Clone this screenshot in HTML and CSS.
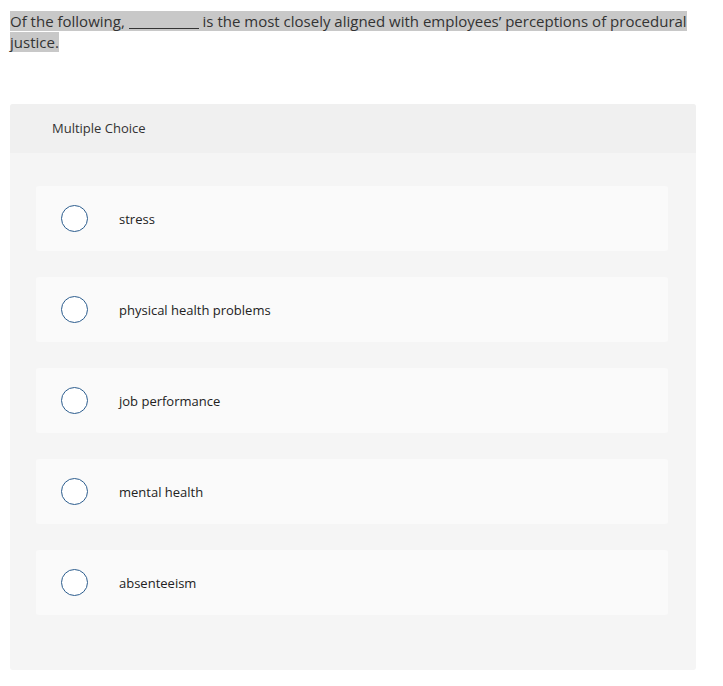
FILE: index.html
```html
<!DOCTYPE html>
<html lang="en">
<head>
  <meta charset="UTF-8">
  <meta name="viewport" content="width=device-width, initial-scale=1">
  <title>Multiple Choice</title>
  <link rel="stylesheet" href="styles.css">
</head>
<body>
  <div class="question">
    <span class="prompt">Of the following, <span class="blank"></span> is the most closely aligned with employees’ perceptions of procedural justice.</span>
  </div>

  <section class="panel">
    <div class="panel-head">Multiple Choice</div>
    <div class="choices">
      <label class="choice">
        <span class="radio"></span>
        <span class="choice-text">stress</span>
      </label>
      <label class="choice">
        <span class="radio"></span>
        <span class="choice-text">physical health problems</span>
      </label>
      <label class="choice">
        <span class="radio"></span>
        <span class="choice-text">job performance</span>
      </label>
      <label class="choice">
        <span class="radio"></span>
        <span class="choice-text">mental health</span>
      </label>
      <label class="choice">
        <span class="radio"></span>
        <span class="choice-text">absenteeism</span>
      </label>
    </div>
  </section>
</body>
</html>
```

FILE: styles.css
```css
body {
  margin: 0;
  font-family: 'Open Sans', 'Noto Sans', sans-serif;
  background-color: #fff;
  color: #333;
}

.question {
  width: 700px;
  height: 42px;
  padding: 11px 0 0 10px;
  font-size: 15px;
  line-height: 21px;
  color: #333;
}

.prompt {
  background-color: #c8c8c8;
}

.blank {
  display: inline-block;
  width: 70px;
  border-bottom: 1px solid #333;
  vertical-align: -2px;
}

.panel {
  margin: 51px 27px 0 10px;
  background-color: #f5f5f5;
  border-radius: 3px;
  overflow: hidden;
}

.panel-head {
  background-color: #f0f0f0;
  height: 49px;
  line-height: 49px;
  padding-left: 42px;
  font-size: 13px;
  color: #333;
}

.choices {
  display: flex;
  flex-direction: column;
  gap: 26px;
  padding: 33px 28px 55px 26px;
}

.choice {
  display: flex;
  align-items: center;
  height: 65px;
  padding-left: 25px;
  background-color: #fafafa;
  border-radius: 3px;
  cursor: pointer;
}

.radio {
  width: 25px;
  height: 25px;
  border: 1.5px solid #2c5d8e;
  border-radius: 50%;
  background-color: #fff;
  flex-shrink: 0;
}

.choice-text {
  margin-left: 31px;
  font-size: 13px;
  color: #222;
}
```
